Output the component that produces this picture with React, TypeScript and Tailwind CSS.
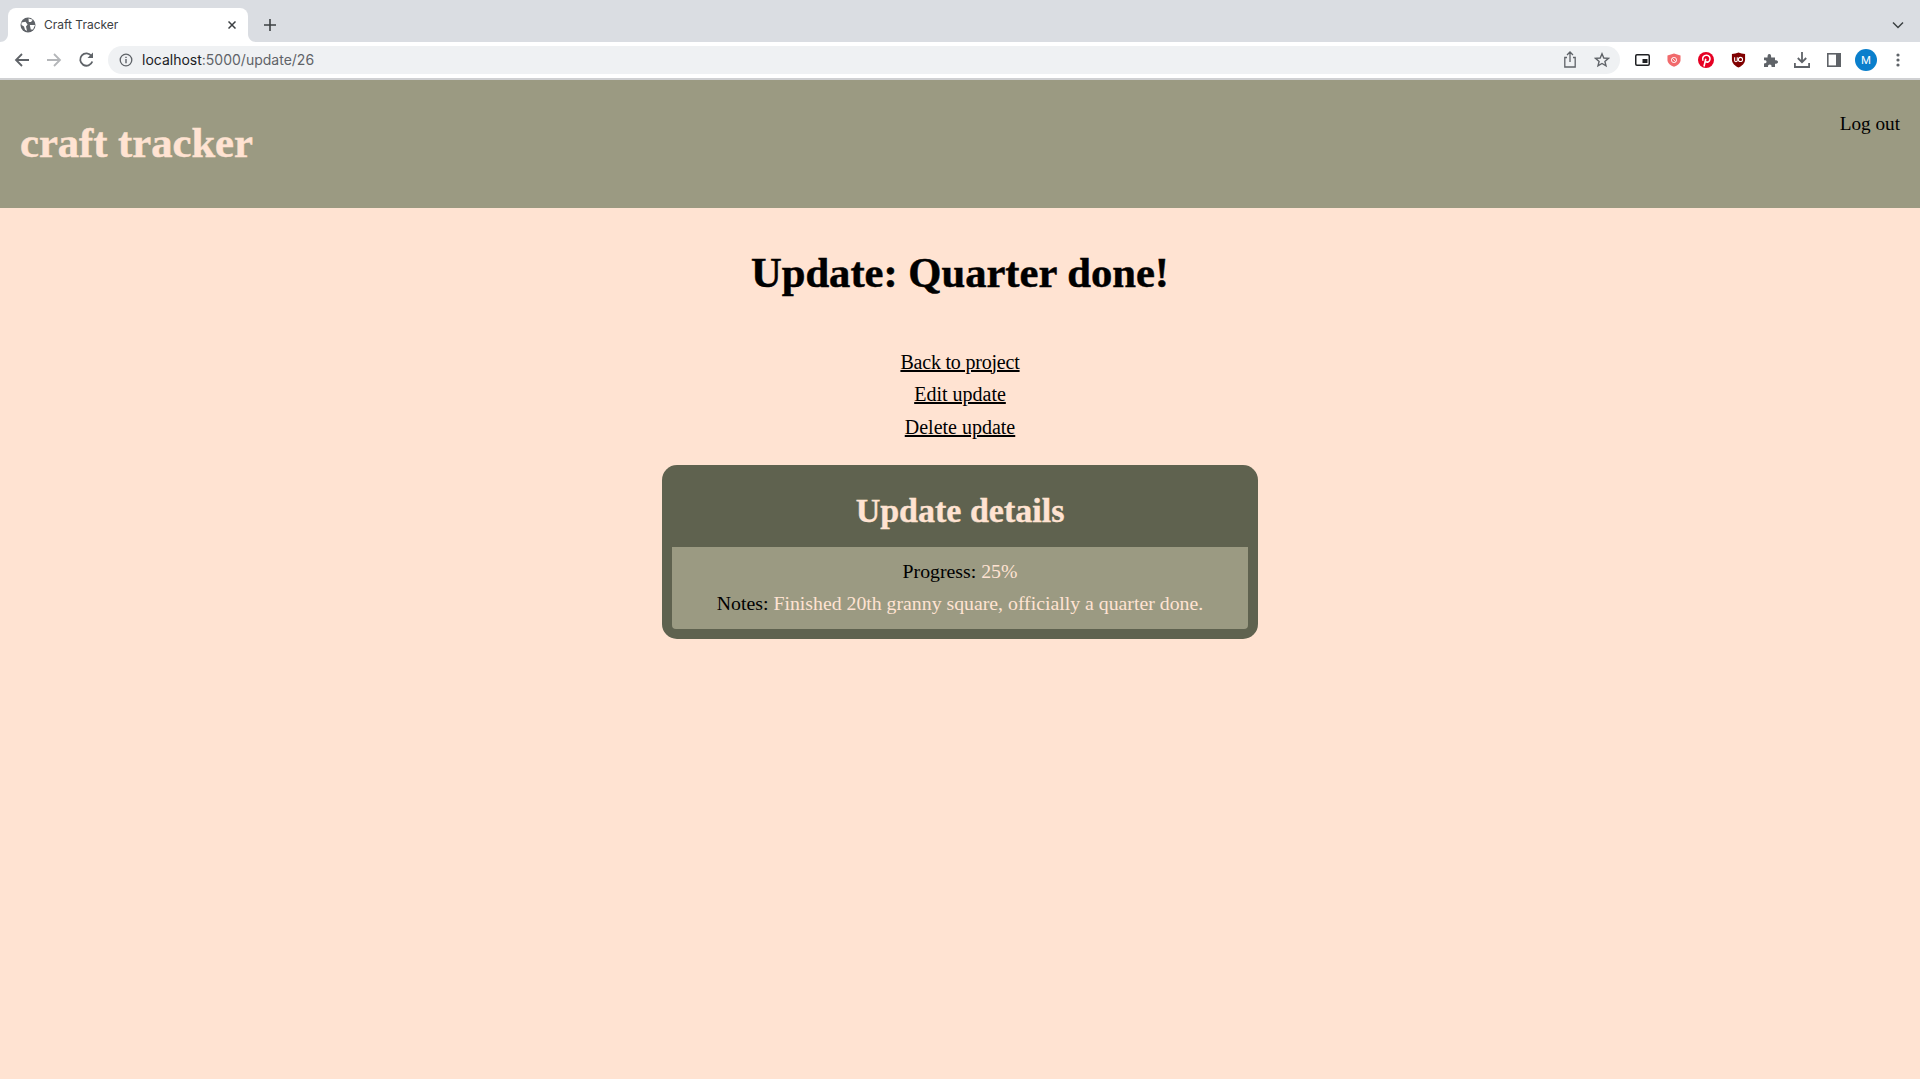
import React from "react";

const serif = "font-['Liberation_Serif',serif]";

function Globe() {
  return (
    <svg width="16" height="16" viewBox="0 0 16 16" className="shrink-0">
      <circle cx="8" cy="8" r="7.5" fill="#5f6368" />
      <path d="M1.5 5.5 L5.5 4.8 L7.6 7.6 L6 9.5 L7 14 L5 12.8 L4 9.5 L1.5 8 Z M8.5 1.5 L12.8 2.8 L11 5 L8.8 5 Z M9.8 8 L15 8 L13 12.5 L10.8 12.5 Z" fill="#fff" />
    </svg>
  );
}

function Slot({ children }: { children: React.ReactNode }) {
  return <div className="w-[32px] h-[32px] shrink-0 flex items-center justify-center">{children}</div>;
}

function ToolIcon({ children, w = 20 }: { children: React.ReactNode; w?: number }) {
  return (
    <svg width={w} height={20} viewBox={`0 0 ${w} 20`} className="shrink-0">
      {children}
    </svg>
  );
}

export default function App() {
  return (
    <div className={`min-h-[1079px] flex flex-col bg-[#ffe3d2] ${serif} text-black`}>
      {/* Tab strip */}
      <div className="h-[42px] bg-[#dadde2] flex items-end pl-2 pr-[16px] font-['Inter',sans-serif]">
        <div className="relative w-[240px] h-[34px] bg-white rounded-t-[8px] flex items-center pl-[12px] pr-[12px]">
          <svg width="8" height="8" viewBox="0 0 8 8" className="absolute left-[-8px] bottom-0">
            <path d="M8 0 V8 H0 C4.5 8 8 4.5 8 0 Z" fill="#fff" />
          </svg>
          <svg width="8" height="8" viewBox="0 0 8 8" className="absolute right-[-8px] bottom-0">
            <path d="M0 0 V8 H8 C3.5 8 0 4.5 0 0 Z" fill="#fff" />
          </svg>
          <Globe />
          <span className="ml-[8px] text-[12px] text-[#3c4043] flex-1">Craft Tracker</span>
          <svg width="8" height="8" viewBox="0 0 8 8">
            <path d="M0.5 0.5 L7.5 7.5 M7.5 0.5 L0.5 7.5" stroke="#3c4043" strokeWidth="1.5" />
          </svg>
        </div>
        <div className="w-[38px] h-[34px] flex items-center justify-center ml-[3px]">
          <svg width="12" height="12" viewBox="0 0 12 12">
            <path d="M6 0 V12 M0 6 H12" stroke="#3c4043" strokeWidth="1.6" />
          </svg>
        </div>
        <div className="flex-1" />
        <div className="h-[34px] flex items-center">
          <svg width="12" height="12" viewBox="0 0 12 12">
            <path d="M1 3.5 L6 8.5 L11 3.5" fill="none" stroke="#3c4043" strokeWidth="1.5" />
          </svg>
        </div>
      </div>

      {/* Toolbar */}
      <div className="h-[36px] bg-white flex items-center pl-[6px] pr-[6px] font-['Inter',sans-serif]">
        <Slot>
          <ToolIcon w={16}>
            <path d="M15 10 H2 M8 4 L2 10 L8 16" fill="none" stroke="#5f6368" strokeWidth="1.8" />
          </ToolIcon>
        </Slot>
        <Slot>
          <ToolIcon w={16}>
            <path d="M1 10 H14 M8 4 L14 10 L8 16" fill="none" stroke="#b4b6b9" strokeWidth="1.8" />
          </ToolIcon>
        </Slot>
        <Slot>
          <ToolIcon w={16}>
            <path d="M13.5 6 A6.2 6.2 0 1 0 14.3 11.5" fill="none" stroke="#5f6368" strokeWidth="1.8" />
            <path d="M15 2.5 V8 H9.5 Z" fill="#5f6368" />
          </ToolIcon>
        </Slot>
        <div className="ml-[6px] mr-[6px] flex-1 h-[28px] rounded-full bg-[#eff1f3] flex items-center pl-[11px] pr-[10px]">
          <svg width="14" height="14" viewBox="0 0 14 14" className="shrink-0">
            <circle cx="7" cy="7" r="5.8" fill="none" stroke="#5f6368" strokeWidth="1.3" />
            <path d="M7 6 V10.3 M7 3.7 V5" stroke="#5f6368" strokeWidth="1.4" />
          </svg>
          <span className="ml-[9px] text-[14px] leading-[18px] mb-[1px] text-[#202124]">
            localhost<span className="text-[#5f6368]">:5000/update/26</span>
          </span>
          <div className="flex-1" />
          <ToolIcon w={14}>
            <path d="M4 7.5 H1.8 V17 H12.2 V7.5 H10 M7 12 V2 M4 5 L7 2 L10 5" fill="none" stroke="#5f6368" strokeWidth="1.3" />
          </ToolIcon>
          <div className="w-[17px]" />
          <svg width="16" height="16" viewBox="0 0 16 16">
            <path d="M8 1.8 L9.8 6 L14.4 6.4 L10.9 9.4 L12 13.9 L8 11.5 L4 13.9 L5.1 9.4 L1.6 6.4 L6.2 6 Z" fill="none" stroke="#5f6368" strokeWidth="1.4" />
          </svg>
        </div>
        <Slot>
          <svg width="15" height="12" viewBox="0 0 15 12">
            <rect x="0.75" y="0.75" width="13.5" height="10.5" rx="1.2" fill="none" stroke="#1f2023" strokeWidth="1.5" />
            <rect x="7.5" y="5" width="5" height="4" fill="#1f2023" />
          </svg>
        </Slot>
        <Slot>
          <svg width="14" height="14" viewBox="0 0 15 15">
            <path d="M7.5 0.5 L14.5 2.8 V7.5 C14.5 11 11 13.6 7.5 14.8 C4 13.6 0.5 11 0.5 7.5 V2.8 Z" fill="#f16a6c" />
            <circle cx="7.5" cy="7.5" r="2.8" fill="none" stroke="#fff" strokeWidth="0.9" />
            <path d="M5.6 5.6 L9.4 9.4" stroke="#fff" strokeWidth="0.8" />
          </svg>
        </Slot>
        <Slot>
          <svg width="16" height="16" viewBox="0 0 16 16">
            <circle cx="8" cy="8" r="8" fill="#e60023" />
            <path d="M6 14.5 L7.8 6.8 M5 8.8 C3.6 5.6 6 3.2 8.5 3.3 C11.3 3.4 12.4 5.4 11.9 7.6 C11.4 10 9.2 10.8 7.5 9.4" fill="none" stroke="#fff" strokeWidth="1.6" />
          </svg>
        </Slot>
        <Slot>
          <svg width="15" height="16" viewBox="0 0 15 17">
            <path d="M7.5 0.5 C9.5 1.5 12 2 14.5 2 V8 C14.5 12 11 15 7.5 16.5 C4 15 0.5 12 0.5 8 V2 C3 2 5.5 1.5 7.5 0.5 Z" fill="#800000" />
            <path d="M3.4 5.6 V9 C3.4 10.8 6.2 10.8 6.2 9 V5.6" fill="none" stroke="#fff" strokeWidth="1.1" />
            <circle cx="9.6" cy="7.9" r="2.2" fill="none" stroke="#fff" strokeWidth="1.1" />
          </svg>
        </Slot>
        <Slot>
          <svg width="15" height="15" viewBox="0 0 15 15">
            <path d="M1 4.5 H4.5 C4.5 2 5 1 6.3 1 C7.6 1 8.2 2 8.2 4.5 H12 V7.2 C14 7.2 15 7.8 15 9 C15 10.2 14 10.8 12 10.8 V14 H8.6 C8.6 12.3 8 11.6 6.8 11.6 C5.6 11.6 5 12.3 5 14 H1 V10.5 C2.8 10.5 3.5 10 3.5 8.8 C3.5 7.6 2.8 7.2 1 7.2 Z" fill="#5f6368" />
          </svg>
        </Slot>
        <Slot>
          <svg width="16" height="16" viewBox="0 0 16 16">
            <path d="M8 0 V10 M3.8 6 L8 10.2 L12.2 6 M0.9 11 V15 H15.1 V11" fill="none" stroke="#5f6368" strokeWidth="1.8" />
          </svg>
        </Slot>
        <Slot>
          <svg width="14" height="14" viewBox="0 0 14 14">
            <rect x="0.8" y="0.8" width="12.4" height="12.4" fill="none" stroke="#5f6368" strokeWidth="1.6" />
            <rect x="9" y="1" width="4" height="12" fill="#5f6368" />
          </svg>
        </Slot>
        <Slot>
          <div className="w-[22px] h-[22px] rounded-full bg-[#0a7fcc] text-white text-[11px] flex items-center justify-center">
            M
          </div>
        </Slot>
        <Slot>
          <svg width="4" height="14" viewBox="0 0 4 14">
            <circle cx="2" cy="2" r="1.6" fill="#5f6368" />
            <circle cx="2" cy="7" r="1.6" fill="#5f6368" />
            <circle cx="2" cy="12" r="1.6" fill="#5f6368" />
          </svg>
        </Slot>
      </div>
      <div className="h-[2px] bg-[#d0d1d3]" />

      {/* App header */}
      <header className="h-[128px] bg-[#9b9a82] flex justify-between pl-5 pr-5">
        <h1 className="text-[42.6px] font-bold text-[#ffe3d2] leading-none mt-[42px] [-webkit-text-stroke:0.5px]">craft tracker</h1>
        <a className="text-[19.2px] leading-none mt-[34px]">Log out</a>
      </header>

      {/* Main */}
      <main className="flex flex-col items-center">
        <h2 className="text-[42.6px] font-bold leading-none mt-[44px] [-webkit-text-stroke:0.5px]">Update: Quarter done!</h2>
        <div className="mt-[51px] flex flex-col items-center text-[20px] leading-[32.5px]">
          <a className="underline tracking-[-0.2px]">Back to project</a>
          <a className="underline">Edit update</a>
          <a className="underline">Delete update</a>
        </div>
        <section className="mt-[22px] w-[596px] rounded-[15px] bg-[#5f624f] p-[10px] pt-0">
          <h3 className="h-[82px] pt-[9px] flex items-center justify-center text-[34px] font-bold text-[#ffe3d2] [-webkit-text-stroke:0.4px]">Update details</h3>
          <div className="bg-[#9b9a82] rounded-b-[4px] h-[82px] pb-[2px] flex flex-col items-center justify-center text-[19.8px] leading-[32px]">
            <p>Progress: <span className="text-[#ffe3d2]">25%</span></p>
            <p>Notes: <span className="text-[#ffe3d2]">Finished 20th granny square, officially a quarter done.</span></p>
          </div>
        </section>
      </main>
    </div>
  );
}
